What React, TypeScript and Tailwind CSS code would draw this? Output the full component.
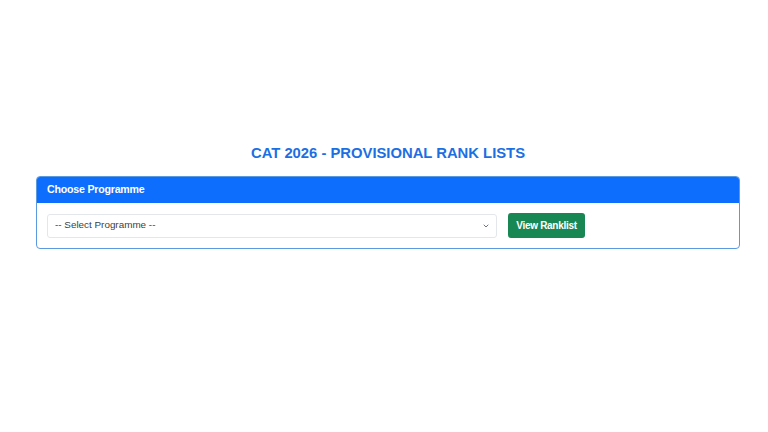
export default function App() {
  return (
    <div className="min-h-[432px] w-full bg-white pl-9 pr-7 pt-[143px] font-['Liberation_Sans',Arial,sans-serif]">
      <h1 className="text-center text-[14.8px] font-bold leading-5 text-[#1c6fe3]">
        CAT 2026 - PROVISIONAL RANK LISTS
      </h1>

      <div className="mt-[13px] overflow-hidden rounded-[4px] border border-[#5c9ae0]">
        {/* Card header */}
        <div className="flex h-[26px] items-center bg-[#0d6efd] px-[10px]">
          <span className="text-[10.6px] font-bold tracking-[-0.2px] text-white">Choose Programme</span>
        </div>

        {/* Card body */}
        <div className="flex items-center gap-[11px] px-[10px] pb-[10px] pt-[10px]">
          <div className="flex h-[24px] w-[450px] items-center justify-between rounded-[3px] border border-[#e3e6ea] bg-white pl-[7px] pr-[6px]">
            <span className="text-[9.9px] text-[#3a3f44]">-- Select Programme --</span>
            <svg width="8" height="8" viewBox="0 0 16 16" fill="none" stroke="#6c757d" strokeWidth="2" strokeLinecap="round" strokeLinejoin="round">
              <path d="M4 6l4 4 4-4" />
            </svg>
          </div>
          <button className="flex h-[25px] w-[77px] items-center justify-center rounded-[3px] bg-[#198754] text-[10px] font-bold tracking-[-0.3px] text-white">
            View Ranklist
          </button>
        </div>
      </div>
    </div>
  );
}
